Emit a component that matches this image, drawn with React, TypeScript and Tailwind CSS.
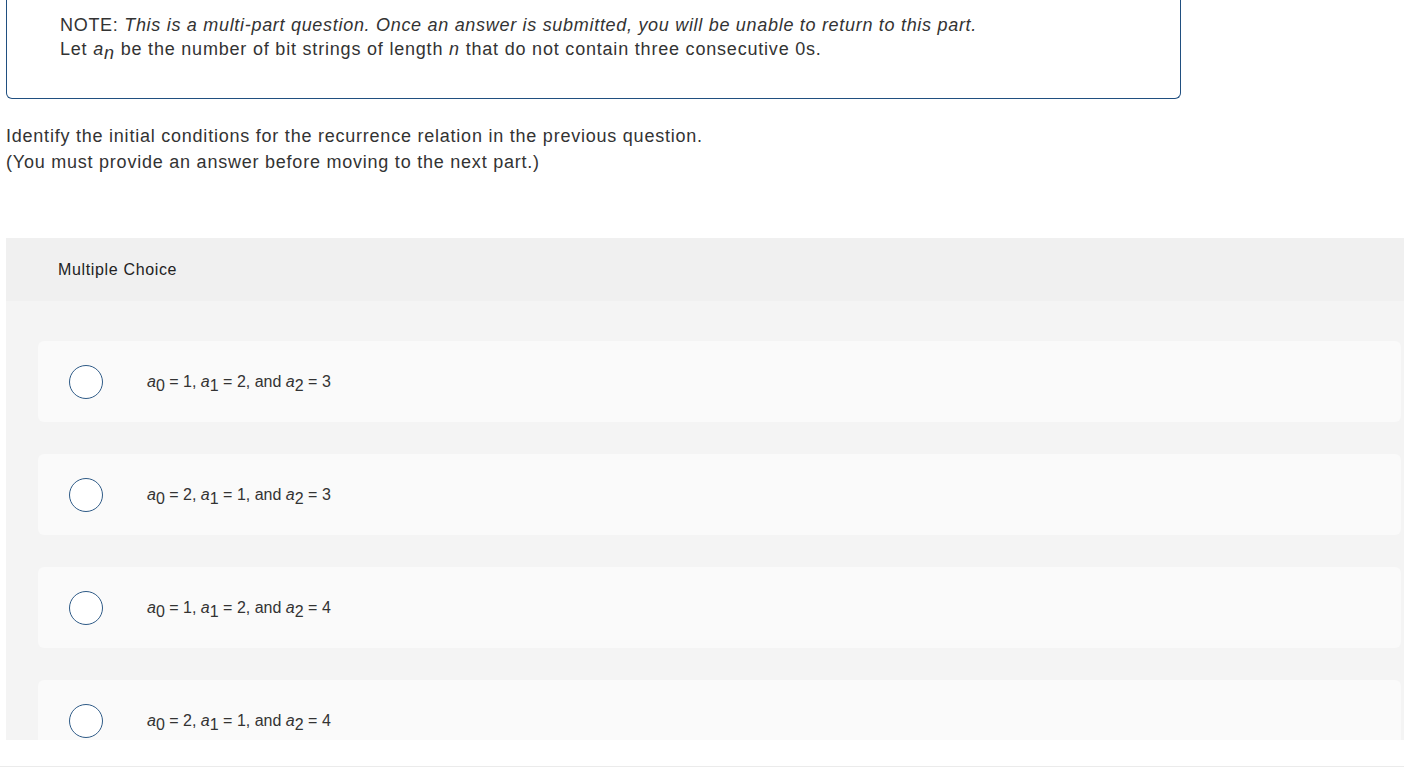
import React from "react";

const font = { fontFamily: "'Liberation Sans', Arial, sans-serif" };

function Sub({ base, sub, italicSub = false }: { base: string; sub: string; italicSub?: boolean }) {
  return (
    <span className="whitespace-nowrap">
      <span className="italic">{base}</span>
      <span className={`relative top-[4px] text-[1em] ${italicSub ? "italic" : ""}`}>{sub}</span>
    </span>
  );
}

function Option({ a0, a1, a2 }: { a0: string; a1: string; a2: string }) {
  return (
    <div className="flex h-[81px] w-full shrink-0 items-center rounded-[6px] bg-[#fafafa]">
      <div className="ml-[31px] h-[34px] w-[34px] shrink-0 rounded-full border-[1.5px] border-[#2f5b87] bg-white" />
      <div className="ml-[44px] pt-[1px] text-[16px] text-[#333]">
        <Sub base="a" sub="0" /> = {a0}, <Sub base="a" sub="1" /> = {a1}, and <Sub base="a" sub="2" /> = {a2}
      </div>
    </div>
  );
}

export default function App() {
  return (
    <div className="relative h-[772px] w-[1404px] overflow-hidden bg-white text-[#333]" style={font}>
      <div className="ml-[6px] h-[99px] w-[1175px] rounded-b-[6px] border-x border-b border-[#204f80] pl-[53px] pt-[13px] text-[18px] leading-[24px]">
        <div className="tracking-[0.7px]">
          NOTE: <span className="italic">This is a multi-part question. Once an answer is submitted, you will be unable to return to this part.</span>
        </div>
        <div className="tracking-[0.8px]">
          Let <Sub base="a" sub="n" italicSub /> be the number of bit strings of length <span className="italic">n</span> that do not contain three consecutive 0s.
        </div>
      </div>

      <div className="ml-[6px] mt-[24px] text-[18px] leading-[26px] tracking-[0.77px]">
        <div>Identify the initial conditions for the recurrence relation in the previous question.</div>
        <div>(You must provide an answer before moving to the next part.)</div>
      </div>

      <div className="ml-[6px] mt-[63px] w-[1398px]">
        <div className="flex h-[63px] items-center bg-[#f0f0f0] pl-[52px] text-[16px] tracking-[0.65px] text-[#222]">Multiple Choice</div>
        <div className="flex h-[439px] flex-col gap-[32px] overflow-hidden bg-[#f4f4f4] pl-[32px] pr-[3px] pt-[40px]">
          <Option a0="1" a1="2" a2="3" />
          <Option a0="2" a1="1" a2="3" />
          <Option a0="1" a1="2" a2="4" />
          <Option a0="2" a1="1" a2="4" />
        </div>
      </div>

      <div className="absolute left-0 top-[766px] h-px w-full bg-[#ebebeb]" />
    </div>
  );
}
